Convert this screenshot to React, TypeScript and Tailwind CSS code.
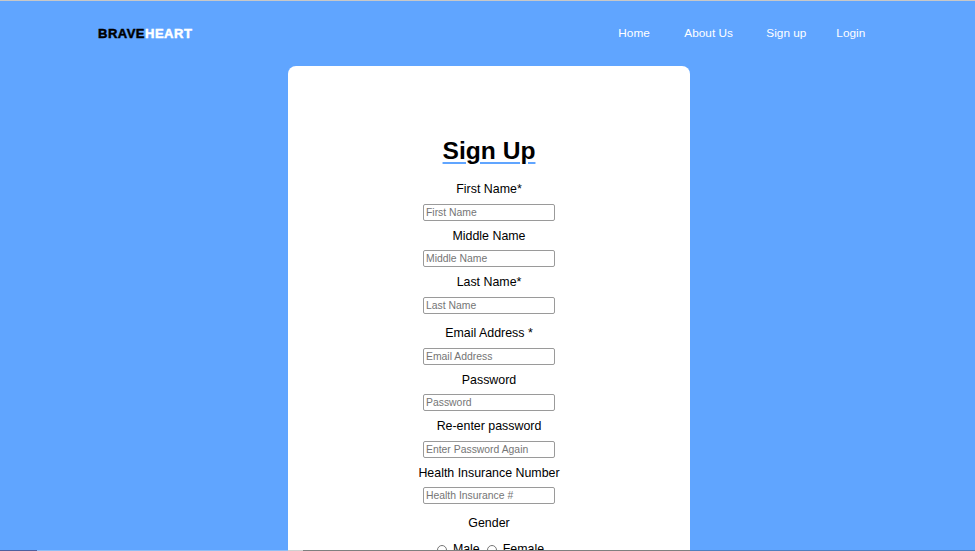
const fields = [
  { label: 'First Name*', placeholder: 'First Name', extra: '' },
  { label: 'Middle Name', placeholder: 'Middle Name', extra: '' },
  { label: 'Last Name*', placeholder: 'Last Name', extra: '' },
  { label: 'Email Address *', placeholder: 'Email Address', extra: 'mt-[4.5px]' },
  { label: 'Password', placeholder: 'Password', extra: '' },
  { label: 'Re-enter password', placeholder: 'Enter Password Again', extra: '' },
  { label: 'Health Insurance Number', placeholder: 'Health Insurance #', extra: '' },
]

export default function App() {
  return (
    <div className="relative h-[551px] overflow-hidden border-t border-[#c8c8c8] bg-[#60a5ff] font-['Liberation_Sans',Arial,sans-serif]">
      {/* Nav */}
      <header className="flex h-[65px] items-center pl-[98px]">
        <div className="text-[13px] font-bold leading-none tracking-[0.5px] [-webkit-text-stroke:0.5px_currentColor]">
          <span className="text-black">BRAVE</span>
          <span className="text-white">HEART</span>
        </div>
        <nav className="ml-[426px] flex text-[11.8px] text-white">
          <a className="w-[66px]">Home</a>
          <a className="w-[82px]">About Us</a>
          <a className="w-[70px]">Sign up</a>
          <a>Login</a>
        </nav>
      </header>

      {/* Form card */}
      <main className="ml-[288px] h-[600px] w-[402px] rounded-t-lg bg-white pt-[69px] text-black">
        <h1 className="text-center text-[24.6px] leading-[32px] font-bold underline decoration-[#60a5ff] decoration-2 underline-offset-[3px]">
          Sign Up
        </h1>
        <form className="mt-[7.5px] flex flex-col items-center">
          {fields.map(f => (
            <div key={f.label} className={`flex h-[46.5px] flex-col items-center ${f.extra}`}>
              <label className="h-[29px] pt-[7.5px] text-[12.4px] leading-[15px]">{f.label}</label>
              <input
                placeholder={f.placeholder}
                className="h-[17px] w-[132px] rounded-[2px] border border-[#9a9a9a] px-[2px] text-[10.4px] outline-none placeholder:text-[#757575]"
              />
            </div>
          ))}
          <label className="mt-[11.5px] text-[12.4px] leading-[15px]">Gender</label>
          <div className="mt-[11px] ml-[3px] flex items-center text-[12.4px] leading-[15px]">
            <input type="radio" name="gender" className="mr-[6px] h-[10px] w-[10px]" />
            <span className="mr-[7px]">Male</span>
            <input type="radio" name="gender" className="mr-[6px] h-[10px] w-[10px]" />
            <span>Female</span>
          </div>
        </form>
      </main>

      {/* Bottom edge of the capture */}
      <div className="absolute inset-x-0 bottom-0 flex h-px bg-[#8fbdf5]">
        <div className="w-[37px] bg-[#4f5f9f]" />
        <div className="ml-[251px] w-[15px] bg-[#d0d0d0]" />
        <div className="w-[387px] bg-[#808080]" />
        <div className="flex-1 bg-[#4f7fc0]" />
      </div>
    </div>
  )
}
